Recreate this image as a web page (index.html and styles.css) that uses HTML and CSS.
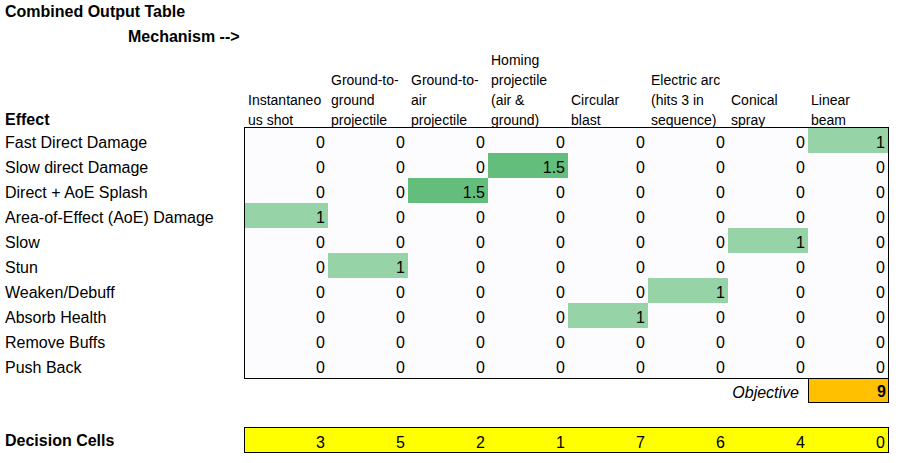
FILE: index.html
```html
<!DOCTYPE html>
<html>
<head>
<meta charset="utf-8">
<link rel="stylesheet" href="styles.css">
</head>
<body>
<div class="sheet">
  <div class="line"><span class="b">Combined Output Table</span></div>
  <div class="line mech"><span class="b">Mechanism --&gt;</span></div>
  <div class="head">
    <div class="hlabel"><span class="b">Effect</span></div>
    <div class="hcell"><div class="htxt">Instantaneo<br>us shot</div></div>
    <div class="hcell"><div class="htxt">Ground-to-<br>ground<br>projectile</div></div>
    <div class="hcell"><div class="htxt">Ground-to-<br>air<br>projectile</div></div>
    <div class="hcell"><div class="htxt">Homing<br>projectile<br>(air &amp;<br>ground)</div></div>
    <div class="hcell"><div class="htxt">Circular<br>blast</div></div>
    <div class="hcell"><div class="htxt">Electric arc<br>(hits 3 in<br>sequence)</div></div>
    <div class="hcell"><div class="htxt">Conical<br>spray</div></div>
    <div class="hcell"><div class="htxt">Linear<br>beam</div></div>
  </div>
  <div class="body">
    <div class="labels">
      <div class="lab">Fast Direct Damage</div>
      <div class="lab">Slow direct Damage</div>
      <div class="lab">Direct + AoE Splash</div>
      <div class="lab">Area-of-Effect (AoE) Damage</div>
      <div class="lab">Slow</div>
      <div class="lab">Stun</div>
      <div class="lab">Weaken/Debuff</div>
      <div class="lab">Absorb Health</div>
      <div class="lab">Remove Buffs</div>
      <div class="lab">Push Back</div>
    </div>
    <div class="grid">
      <div class="c">0</div><div class="c">0</div><div class="c">0</div><div class="c">0</div><div class="c">0</div><div class="c">0</div><div class="c">0</div><div class="c g1">1</div>
      <div class="c">0</div><div class="c">0</div><div class="c">0</div><div class="c g2">1.5</div><div class="c">0</div><div class="c">0</div><div class="c">0</div><div class="c">0</div>
      <div class="c">0</div><div class="c">0</div><div class="c g2">1.5</div><div class="c">0</div><div class="c">0</div><div class="c">0</div><div class="c">0</div><div class="c">0</div>
      <div class="c g1">1</div><div class="c">0</div><div class="c">0</div><div class="c">0</div><div class="c">0</div><div class="c">0</div><div class="c">0</div><div class="c">0</div>
      <div class="c">0</div><div class="c">0</div><div class="c">0</div><div class="c">0</div><div class="c">0</div><div class="c">0</div><div class="c g1">1</div><div class="c">0</div>
      <div class="c">0</div><div class="c g1">1</div><div class="c">0</div><div class="c">0</div><div class="c">0</div><div class="c">0</div><div class="c">0</div><div class="c">0</div>
      <div class="c">0</div><div class="c">0</div><div class="c">0</div><div class="c">0</div><div class="c">0</div><div class="c g1">1</div><div class="c">0</div><div class="c">0</div>
      <div class="c">0</div><div class="c">0</div><div class="c">0</div><div class="c">0</div><div class="c g1">1</div><div class="c">0</div><div class="c">0</div><div class="c">0</div>
      <div class="c">0</div><div class="c">0</div><div class="c">0</div><div class="c">0</div><div class="c">0</div><div class="c">0</div><div class="c">0</div><div class="c">0</div>
      <div class="c">0</div><div class="c">0</div><div class="c">0</div><div class="c">0</div><div class="c">0</div><div class="c">0</div><div class="c">0</div><div class="c">0</div>
    </div>
  </div>
  <div class="obj">
    <div class="obj-label">Objective</div>
    <div class="obj-val">9</div>
  </div>
  <div class="decision">
    <div class="dlabel"><span class="b">Decision Cells</span></div>
    <div class="dgrid">
      <div class="c first">3</div><div class="c">5</div><div class="c">2</div><div class="c">1</div><div class="c">7</div><div class="c">6</div><div class="c">4</div><div class="c">0</div>
    </div>
  </div>
</div>
</body>
</html>
```
FILE: styles.css
```css
html, body {
  margin: 0;
  padding: 0;
  background: #ffffff;
}
body {
  font-family: "Liberation Sans", Arial, sans-serif;
  font-size: 16px;
  color: #000;
}
.b { font-weight: bold; }
.sheet {
  width: 898px;
}
.line {
  height: 25px;
  line-height: 24px;
  padding-left: 5px;
}
.mech { padding-left: 128px; }

.head {
  display: grid;
  grid-template-columns: 245px 83px repeat(7, 80px);
  height: 77px;
}
.hlabel, .hcell {
  display: flex;
  align-items: flex-end;
}
.hlabel {
  padding-left: 5px;
  line-height: 18px;
  padding-bottom: 3px;
}
.hcell {
  padding-left: 3px;
  font-size: 14px;
}
.htxt {
  line-height: 20px;
  white-space: nowrap;
  margin-bottom: 2px;
}

.body {
  display: flex;
}
.labels {
  width: 244px;
  padding-top: 1px;
}
.lab, .c {
  height: 25px;
  box-sizing: border-box;
  display: flex;
  align-items: flex-end;
  line-height: 18px;
  padding-bottom: 1px;
  white-space: nowrap;
}
.lab { padding-left: 5px; }
.c {
  justify-content: flex-end;
  padding-right: 3px;
}
.grid {
  display: grid;
  grid-template-columns: 83px repeat(7, 80px);
  grid-auto-rows: 25px;
  border: 1px solid #000;
  background: #fcfcff;
}
.g1 { background: #96d3a7; }
.g2 { background: #63be7b; }

.obj {
  display: flex;
  height: 25px;
  margin-top: -1px;
}
.obj-label {
  width: 808px;
  box-sizing: border-box;
  text-align: right;
  padding-right: 9px;
  font-style: italic;
  display: flex;
  align-items: flex-end;
  justify-content: flex-end;
  line-height: 18px;
  padding-bottom: 1px;
}
.obj-val {
  width: 81px;
  height: 25px;
  box-sizing: border-box;
  border: 1px solid #000;
  background: #ffc000;
  font-weight: bold;
  display: flex;
  align-items: flex-end;
  justify-content: flex-end;
  padding-right: 2px;
  line-height: 18px;
  padding-bottom: 1px;
}

.decision {
  display: flex;
  margin-top: 24px;
}
.dlabel {
  width: 244px;
  padding-left: 5px;
  box-sizing: border-box;
  display: flex;
  align-items: flex-end;
  line-height: 18px;
  padding-bottom: 3px;
}
.dgrid {
  display: grid;
  grid-template-columns: 83px repeat(7, 80px);
  grid-auto-rows: 24px;
  border: 1px solid #000;
  background: #ffff00;
}
.dgrid .c { height: 24px; padding-bottom: 0; }
```
